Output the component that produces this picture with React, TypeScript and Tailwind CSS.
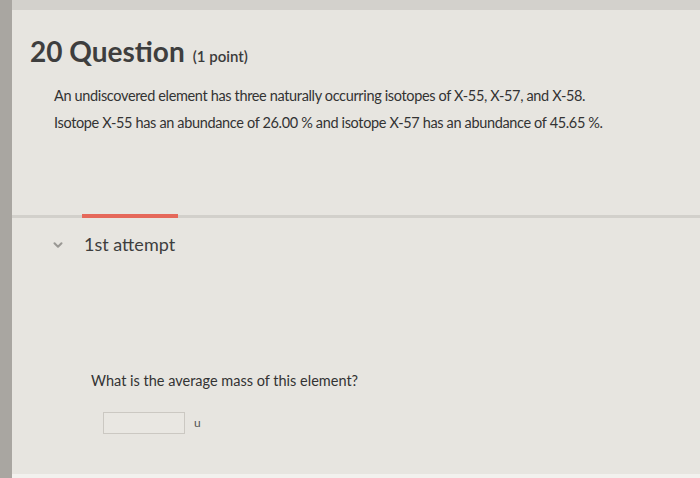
import { ChevronDown } from 'lucide-react';

export default function App() {
  return (
    <div className="flex h-[478px] w-[700px] overflow-hidden bg-[#d9d6d0] font-['Lato',sans-serif] text-[#3b3b3b]">
      <div className="w-[12px] shrink-0 bg-[#a9a6a1]" />
      <div className="flex flex-1 flex-col">
        <div className="h-[10px] bg-[#d3d1cc]" />
        <div className="flex flex-1 flex-col bg-[#e7e5e0]">
          <div className="pl-[18px] pt-[24px]">
            <h1 className="flex items-baseline gap-[8px]">
              <span className="text-[28px] font-bold leading-[34px] text-[#3e3e3e]">20 Question</span>
              <span className="text-[15px] font-semibold">(1 point)</span>
            </h1>
          </div>
          <div className="pl-[42px] pt-[14px] text-[14.5px] leading-[27px] tracking-[-0.35px] text-[#333]">
            <p>An undiscovered element has three naturally occurring isotopes of X-55, X-57, and X-58.</p>
            <p>Isotope X-55 has an abundance of 26.00 % and isotope X-57 has an abundance of 45.65 %.</p>
          </div>
          <div className="relative mt-[79px] h-[3px] bg-[#d2d0cb]">
            <div className="absolute left-[70px] top-[-1px] h-[4px] w-[96px] bg-[#e5685a]" />
          </div>
          <div className="flex items-center pl-[39px] pt-[13px]">
            <ChevronDown className="h-[14px] w-[14px] text-[#9a9894]" strokeWidth={3.5} />
            <span className="ml-[19px] text-[18px] text-[#3e3e3e]">1st attempt</span>
          </div>
          <p className="pl-[79px] pt-[112px] text-[14.5px] text-[#333]">What is the average mass of this element?</p>
          <div className="flex items-center pl-[91px] pt-[20px]">
            <div className="h-[22px] w-[82px] border border-[#cbc8c2] bg-[#e9e7e2]" />
            <span className="ml-[9px] text-[12px] text-[#555]">u</span>
          </div>
        </div>
        <div className="h-[4px] bg-[#f2f1ee]" />
      </div>
    </div>
  );
}
